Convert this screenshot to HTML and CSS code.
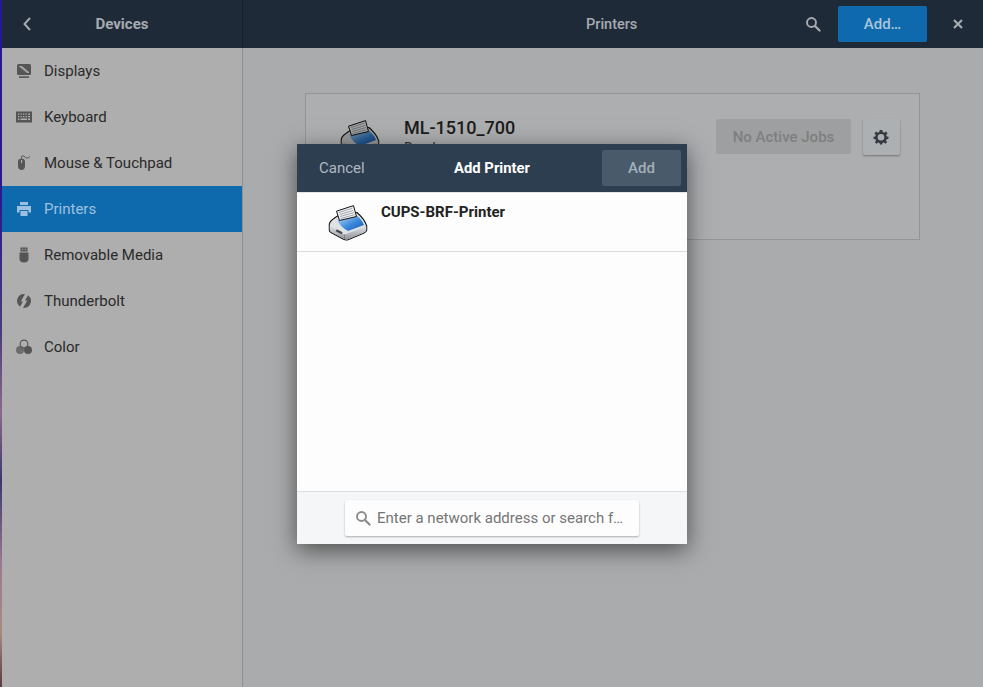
FILE: index.html
```html
<!DOCTYPE html>
<html lang="en">
<head>
<meta charset="utf-8">
<title>Printers</title>
<link rel="stylesheet" href="styles.css">
</head>
<body>
<svg class="defs" width="0" height="0" aria-hidden="true">
  <defs>
    <linearGradient id="front-grad" x1="0" y1="0" x2="0" y2="1">
      <stop offset="0" stop-color="#e2e4e7"/>
      <stop offset="1" stop-color="#8f949a"/>
    </linearGradient>
    <linearGradient id="well-grad" x1="0" y1="0" x2="1" y2="1">
      <stop offset="0" stop-color="#c3dcf4"/>
      <stop offset="0.550" stop-color="#3b88dc"/>
      <stop offset="1" stop-color="#1a55ac"/>
    </linearGradient>
    <symbol id="printer" viewBox="0 0 40 36">
      <path d="M1.300 19 C1.300 17 6 13 12 9.500 L29 7.500 C33 11 37 15 38.700 21 V25 C38.700 26.500 37 27.500 35 28.500 L20 34.700 C18.500 35.100 17 35 15.500 34.300 L3 27.500 C1.800 26.800 1.300 26 1.300 25 Z" fill="#dfe2e5" stroke="#141414" stroke-width="1.100"/>
      <path d="M1.800 20.500 L16.500 29.500 L38.200 21.500 V25 C38.200 26.300 36.500 27.200 35 28 L20 34.200 C18.500 34.600 17 34.500 15.500 33.800 L3.200 27 C2.200 26.400 1.800 25.800 1.800 25 Z" fill="url(#front-grad)"/>
      <path d="M9 14.500 L28.500 10.500 C32 13 35 16.500 36 20 L20 26 C15 23.500 11 19.500 9 14.500 Z" fill="url(#well-grad)"/>
      <path d="M8.500 6.200 L25.500 0.600 L28.500 11.500 L11.500 15.500 Z" fill="#eceef0" stroke="#141414" stroke-width="1"/>
      <path d="M11 7.500 L24.200 3.200 M11.600 9.500 L25 5.500 M12.200 11.500 L25.800 7.600 M12.800 13.500 L26.400 9.700" stroke="#a4a9ae" stroke-width="1"/>
      <path d="M16.500 29.500 V34" stroke="#7d8288" stroke-width="1"/>
      <rect x="8" y="25.500" width="6.500" height="2.200" fill="#44474b" transform="rotate(28 11 26.500)"/>
    </symbol>
    <symbol id="search" viewBox="0 0 16 16">
      <circle cx="6.500" cy="6.500" r="4.500" fill="none" stroke="currentColor" stroke-width="1.900"/>
      <path d="M10 10 L14.500 14.500" stroke="currentColor" stroke-width="2.300" stroke-linecap="round"/>
    </symbol>
  </defs>
</svg>

<div class="window">
  <header class="titlebar">
    <div class="tb-left">
      <svg class="back" viewBox="0 0 12 16" width="12" height="16"><path d="M9 2 L3.500 8 L9 14" fill="none" stroke="currentColor" stroke-width="2"/></svg>
      <span class="tb-left-title">Devices</span>
    </div>
    <div class="tb-right">
      <span class="tb-title">Printers</span>
      <svg class="tb-search" width="16" height="16"><use href="#search"/></svg>
      <button class="tb-add">Add…</button>
      <svg class="tb-close" viewBox="0 0 12 12" width="12" height="12"><path d="M2 2 L10 10 M10 2 L2 10" stroke="currentColor" stroke-width="2.200"/></svg>
    </div>
  </header>
  <div class="main">
    <nav class="sidebar">
      <div class="nav-row">
        <svg class="nav-icon" viewBox="0 0 16 16" width="16" height="16"><rect x="1" y="1" width="14" height="11" rx="1.500" fill="currentColor"/><path d="M3 3 H6 L13 9 V10 H11 L3 3.500 Z" fill="#a2a2a2"/><rect x="3" y="13.300" width="10" height="1.600" fill="currentColor"/></svg>
        <span>Displays</span>
      </div>
      <div class="nav-row">
        <svg class="nav-icon" viewBox="0 0 16 16" width="16" height="16"><path fill-rule="evenodd" d="M0 2.500 H16 V13.500 H0 Z M2 4.500 V5.800 H3.300 V4.500 Z M4.500 4.500 V5.800 H5.800 V4.500 Z M7 4.500 V5.800 H8.300 V4.500 Z M9.500 4.500 V5.800 H10.800 V4.500 Z M12 4.500 V5.800 H14 V4.500 Z M2 7 V8.300 H3.300 V7 Z M4.500 7 V8.300 H5.800 V7 Z M7 7 V8.300 H8.300 V7 Z M9.500 7 V8.300 H10.800 V7 Z M12 7 V8.300 H14 V7 Z M2 9.500 V11 H3.300 V9.500 Z M4.500 9.500 V11 H11 V9.500 Z M12 9.500 V11 H14 V9.500 Z" fill="currentColor"/></svg>
        <span>Keyboard</span>
      </div>
      <div class="nav-row">
        <svg class="nav-icon" viewBox="0 0 16 16" width="16" height="16"><path d="M2 6.500 C2 4.500 3.500 3.500 5.500 3.500 C7.500 3.500 9 4.500 9 6.500 V11 C9 13.500 7.500 15 5.500 15 C3.500 15 2 13.500 2 11 Z" fill="currentColor"/><rect x="5" y="5" width="1.200" height="3" fill="#aeaeae"/><path d="M5.500 3.500 V2 C5.500 0.500 8 0.500 9 2 C10 3.500 12 3.500 14 1.500" fill="none" stroke="currentColor" stroke-width="1"/></svg>
        <span>Mouse &amp; Touchpad</span>
      </div>
      <div class="nav-row selected">
        <svg class="nav-icon" viewBox="0 0 16 16" width="16" height="16"><path fill-rule="evenodd" d="M4 1 H12 V4 H4 Z M1 5 H15 V11.500 H12.500 V9 H3.500 V11.500 H1 Z" fill="currentColor"/><rect x="4.500" y="10" width="7" height="5" fill="currentColor"/></svg>
        <span>Printers</span>
      </div>
      <div class="nav-row">
        <svg class="nav-icon" viewBox="0 0 16 16" width="16" height="16"><path fill-rule="evenodd" d="M4.500 0.500 H11.500 V4.500 H4.500 Z M6 1.800 V3 H7.200 V1.800 Z M8.800 1.800 V3 H10 V1.800 Z" fill="currentColor"/><path d="M3.500 5.500 H12.500 V12 C12.500 14 11 15.500 8 15.500 C5 15.500 3.500 14 3.500 12 Z" fill="currentColor"/></svg>
        <span>Removable Media</span>
      </div>
      <div class="nav-row">
        <svg class="nav-icon" viewBox="0 0 16 16" width="16" height="16"><path d="M8 1 A7 7 0 0 0 4 13.700 L7 8.500 H4.800 L9 1.100 Z M8 15 A7 7 0 0 0 12 2.300 L9 7.500 H11.200 L7 14.900 Z" fill="currentColor"/></svg>
        <span>Thunderbolt</span>
      </div>
      <div class="nav-row">
        <svg class="nav-icon" viewBox="0 0 16 16" width="16" height="16"><circle cx="8" cy="5" r="3.900" fill="none" stroke="currentColor" stroke-width="1.100"/><circle cx="4" cy="11" r="4" fill="currentColor" opacity=".75"/><circle cx="12" cy="11" r="4" fill="currentColor"/></svg>
        <span>Color</span>
      </div>
    </nav>
    <main class="content">
      <section class="card">
        <svg class="card-icon" width="40" height="36"><use href="#printer"/></svg>
        <div class="card-info">
          <div class="card-name">ML-1510_700</div>
          <div class="card-state">Ready</div>
        </div>
        <div class="card-actions">
          <button class="jobs">No Active Jobs</button>
          <button class="gear" aria-label="Settings">
            <svg viewBox="0 0 16 16" width="16" height="16"><path fill-rule="evenodd" d="M6.700 1 H9.300 L9.700 3 L11.300 3.700 L13 2.500 L14.500 4.300 L13.200 5.900 L13.800 7.400 L15.500 7.700 V9.800 L13.700 10.200 L13 11.700 L14.100 13.300 L12.400 14.700 L10.900 13.500 L9.400 14.100 L9.100 15.500 H6.900 L6.600 14.100 L5.100 13.500 L3.600 14.700 L1.900 13.300 L3 11.700 L2.300 10.200 L0.500 9.800 V7.700 L2.200 7.400 L2.800 5.900 L1.500 4.300 L3 2.500 L4.700 3.700 L6.300 3 Z M8 5 A3.300 3.300 0 1 0 8 11.600 A3.300 3.300 0 1 0 8 5 Z" fill="currentColor"/></svg>
          </button>
        </div>
      </section>
    </main>
  </div>
</div>

<div class="dialog">
  <header class="dlg-head">
    <span class="dlg-cancel">Cancel</span>
    <span class="dlg-title">Add Printer</span>
    <button class="dlg-add">Add</button>
  </header>
  <div class="dlg-list">
    <div class="dlg-row">
      <svg class="dlg-icon" width="40" height="36"><use href="#printer"/></svg>
      <span class="dlg-name">CUPS-BRF-Printer</span>
    </div>
  </div>
  <footer class="dlg-foot">
    <div class="entry">
      <svg class="entry-icon" width="16" height="16"><use href="#search"/></svg>
      <span class="entry-text">Enter a network address or search f…</span>
    </div>
  </footer>
</div>
</body>
</html>
```
FILE: styles.css
```css
* { box-sizing: border-box; }
html, body { height: 100%; }
body {
  margin: 0;
  overflow: hidden;
  font-family: Roboto, "Liberation Sans", sans-serif;
  font-size: 15px;
  background: linear-gradient(180deg, #24179a 0%, #2c1a8c 30%, #4a3a7c 48%, #8a6a8c 60%, #3e3670 70%, #9a7a90 82%, #a88a80 92%, #5c3a40 100%);
  padding-left: 2px;
}
button { font: inherit; border: 0; padding: 0; }
.defs { position: absolute; }
.window { height: 687px; display: flex; flex-direction: column; background: #aaabac; }

.titlebar { flex: 0 0 48px; display: flex; background: #1f2a38; }
.tb-left { flex: 0 0 241px; display: flex; align-items: center; border-right: 1px solid #17202b; padding-left: 19px; color: #a6abb1; }
.back { flex: none; }
.tb-left-title { flex: 1; text-align: center; font-weight: 700; padding-right: 31px; font-size: 15px; }
.tb-right { flex: 1; display: flex; align-items: center; position: relative; color: #a6abb1; padding-right: 19px; }
.tb-title { position: absolute; left: 343px; font-weight: 500; font-size: 14.500px; }
.tb-search { margin-left: auto; margin-right: 17px; color: #a6abb1; }
.tb-add { width: 89px; height: 36px; margin-right: 25px; background: #0f6aad; color: #a9c5dc; border-radius: 2px; font-size: 15px; font-weight: 500; }
.tb-close { color: #a6abb1; }

.main { flex: 1; display: flex; min-height: 0; }
.sidebar { flex: 0 0 241px; background: #aeaeae; border-right: 1px solid #8f9194; color: #2a2a2a; }
.nav-row { height: 46px; display: flex; align-items: center; gap: 12px; padding-left: 14px; font-size: 15px; }
.nav-icon { flex: none; color: #555; }
.nav-row.selected { background: #0f6aad; color: #9cc1e0; }
.nav-row.selected .nav-icon { color: #9cc1e0; }

.content { flex: 1; padding: 45px 63px 0 62px; background: #aaabac; }
.card { height: 147px; border: 1px solid #949597; display: flex; align-items: flex-start; background: #adaeaf; }
.card-icon { flex: none; margin: 26px 0 0 34px; filter: brightness(.68); }
.card-info { margin: 22px 0 0 24px; flex: 1; }
.card-name { font-size: 18px; font-weight: 500; color: #1c1c1c; line-height: 24px; }
.card-state { font-size: 14px; color: #333; line-height: 16px; }
.card-actions { display: flex; gap: 12px; margin: 25px 19px 0 0; }
.jobs { width: 135px; height: 35px; background: #9e9fa0; color: #7e7f80; font-size: 15px; font-weight: 500; border-radius: 2px; }
.gear { width: 37px; height: 36px; background: #adb0b3; color: #333a40; border-radius: 2px; box-shadow: 0 1px 2px rgba(0, 0, 0, .35); display: flex; align-items: center; justify-content: center; padding: 0 2px 1px 0; }

.dialog { position: absolute; left: 297px; top: 144px; width: 390px; height: 400px; display: flex; flex-direction: column; background: #fdfdfd; box-shadow: 0 6px 22px rgba(0, 0, 0, .55); }
.dlg-head { flex: 0 0 48px; background: #2d3e50; display: flex; align-items: center; position: relative; padding: 0 6px 0 22px; }
.dlg-cancel { color: #b0b8c0; font-size: 15px; }
.dlg-title { position: absolute; left: 0; right: 0; text-align: center; color: #fff; font-weight: 700; font-size: 14.800px; pointer-events: none; }
.dlg-add { margin-left: auto; width: 79px; height: 36px; background: #495a6b; color: #a5afb8; font-size: 15px; font-weight: 500; border-radius: 2px; }
.dlg-list { flex: 1; border-top: 1px solid #e6e6e6; }
.dlg-row { height: 59px; border-bottom: 1px solid #dcdcdc; display: flex; align-items: flex-start; }
.dlg-icon { flex: none; margin: 12px 0 0 31px; }
.dlg-name { margin: 10px 0 0 13px; font-weight: 700; font-size: 15px; color: #222; line-height: 18px; }
.dlg-foot { flex: 0 0 53px; border-top: 1px solid #dcdee0; background: #f5f6f8; display: flex; justify-content: center; padding-top: 8px; }
.entry { width: 294px; height: 36px; background: #fdfdfd; border-radius: 2px; box-shadow: 0 1px 2px rgba(0, 0, 0, .3); display: flex; align-items: center; gap: 6px; padding-left: 10px; color: #757575; font-size: 15px; }
.entry-icon { flex: none; color: #8b8b8b; }
.entry-text { white-space: nowrap; }
```
